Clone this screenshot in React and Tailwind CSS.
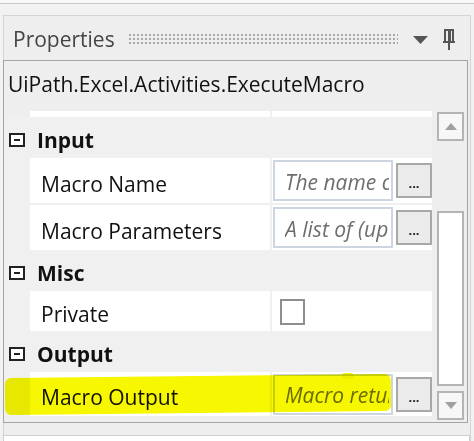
import React from 'react';

const font = { fontFamily: '"Open Sans", "Noto Sans", sans-serif' };

const MinusBox = () => (
    <div className="w-[16px] h-[14px] border-2 border-[#222] flex items-center justify-center bg-white">
        <div className="w-[6px] h-[2px] bg-[#222]" />
    </div>
);

const Category = ({ label, h }) => (
    <div className={`flex items-center bg-[#f0f0f0] ${h}`}>
        <div className="w-[26px] pl-[5px] pt-[4px] flex items-center">
            <MinusBox />
        </div>
        <span className="pl-[7px] pt-[6px] text-[21px] font-bold text-[#111]">{label}</span>
    </div>
);

const ValueBox = ({ placeholder }) => (
    <div className="flex items-center h-full">
        <div className="ml-[1px] w-[120px] h-[41px] border-2 border-[#cdd5e0] bg-white flex items-center pl-[10px] pt-[4px]">
            <div className="w-[104px] overflow-hidden whitespace-nowrap italic text-[21px] text-[#6e6e6e]">{placeholder}</div>
        </div>
        <button className="ml-[3px] w-[36px] h-[35px] border-2 border-[#a8a8a8] bg-[#ebebeb] flex items-end justify-center pb-[6px] text-[13px] font-bold text-[#222] leading-none">
            ...
        </button>
    </div>
);

const PropRow = ({ name, h, children }) => (
    <div className={`flex ${h}`}>
        <div className="w-[26px] bg-[#f0f0f0]" />
        <div className="w-[240px] bg-white flex items-center pl-[11px] pt-[8px] text-[21px] text-[#111]">{name}</div>
        <div className="w-[2px] bg-[#f0f0f0]" />
        <div className="w-[160px] bg-white">{children}</div>
    </div>
);

const ScrollButton = ({ up }) => (
    <div className="h-[29px] border-2 border-[#b4b4b4] bg-[#f7f7f7] flex items-center justify-center">
        <svg width="12" height="7" viewBox="0 0 12 7">
            {up ? <polygon points="0,7 6,0 12,7" fill="#a0a0a0" /> : <polygon points="0,0 12,0 6,7" fill="#a0a0a0" />}
        </svg>
    </div>
);

const PropertiesPanel = () => {
    return (
        <div className="w-[474px] h-[441px] bg-[#f2f2f2] overflow-hidden" style={font}>
            <div className="h-[3px] bg-[#f7f7f7]" />
            <div className="h-[1px] bg-[#c8c8c8]" />
            <div className="h-[11px]" />
            <div className="ml-[3px] mr-[3px] border-l border-t border-r border-[#d4d4d4] bg-[#eeeeee]">
                {/* header */}
                <div className="h-[44px] flex items-center pt-[3px]">
                    <span className="pl-[9px] text-[21px] text-[#444]">Properties</span>
                    <div className="ml-[13px] w-[270px] h-[13px] bg-[radial-gradient(circle,#a8a8a8_1px,transparent_1.3px)] bg-[length:4px_4px]" />
                    <svg className="ml-[15px]" width="15" height="8" viewBox="0 0 15 8">
                        <polygon points="0,0 15,0 7.5,8" fill="#555" />
                    </svg>
                    <svg className="ml-[15px]" width="12" height="22" viewBox="0 0 12 22">
                        <rect x="2" y="1" width="8" height="12" fill="none" stroke="#555" strokeWidth="2" />
                        <rect x="5" y="2" width="3" height="10" fill="#555" />
                        <line x1="0" y1="13" x2="12" y2="13" stroke="#555" strokeWidth="2" />
                        <line x1="6" y1="13" x2="6" y2="21" stroke="#555" strokeWidth="2" />
                    </svg>
                </div>
                {/* property grid box */}
                <div className="-ml-[1px] w-[465px] h-[363px] border border-[#a4a4a4] bg-[#eeeeee] flex flex-col">
                    <div className="h-[50px] pt-[9px] pl-[4px] text-[21px] text-[#111] leading-[28px]">
                        UiPath.Excel.Activities.ExecuteMacro
                    </div>
                    <div className="flex">
                        <div className="relative w-[428px] h-[305px] overflow-hidden">
                            <div className="flex h-[6px]">
                                <div className="w-[26px]" />
                                <div className="w-[240px] bg-white" />
                                <div className="w-[2px] bg-[#f0f0f0]" />
                                <div className="w-[160px] bg-white" />
                            </div>
                            <Category label="Input" h="h-[41px]" />
                            <PropRow name="Macro Name" h="h-[45px]">
                                <ValueBox placeholder="The name of the macro" />
                            </PropRow>
                            <div className="h-[2px] bg-[#f0f0f0]" />
                            <PropRow name="Macro Parameters" h="h-[45px]">
                                <ValueBox placeholder="A list of (up to 30) parameters" />
                            </PropRow>
                            <Category label="Misc" h="h-[41px]" />
                            <PropRow name="Private" h="h-[40px]">
                                <div className="h-full flex items-center pl-[8px] pt-[1px]">
                                    <div className="w-[25px] h-[26px] border-2 border-[#8e8e8e] bg-white" />
                                </div>
                            </PropRow>
                            <Category label="Output" h="h-[41px]" />
                            <PropRow name="Macro Output" h="h-[44px]">
                                <ValueBox placeholder="Macro return value" />
                            </PropRow>
                            {/* marker highlight over the output row */}
                            <div className="absolute left-[1px] top-[265px] w-[386px] h-[37px] bg-[#f6f700] mix-blend-multiply rounded-[6px] -rotate-[0.6deg] pointer-events-none" />
                            <div className="absolute left-[338px] top-[262px] w-[12px] h-[6px] bg-[#f6f700] mix-blend-multiply rounded-full pointer-events-none" />
                        </div>
                        <div className="ml-[5px] w-[27px] pt-[1px] flex flex-col">
                            <ScrollButton up />
                            <div className="h-[70px]" />
                            <div className="h-[175px] border-2 border-[#b4b4b4] bg-white" />
                            <div className="h-[5px]" />
                            <ScrollButton />
                        </div>
                    </div>
                </div>
                <div className="h-[12px]" />
                <div className="-ml-[1px] h-[20px] border-t border-l border-r border-[#cfcfcf] bg-white" />
            </div>
        </div>
    );
};

export default function App() {
    return <PropertiesPanel />;
}
